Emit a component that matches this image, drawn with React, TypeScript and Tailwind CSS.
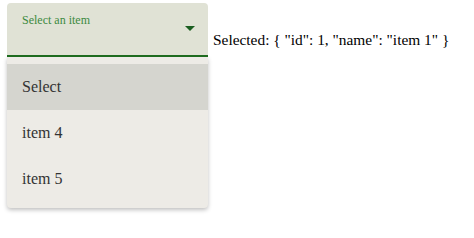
import { useState } from "react";

interface Item {
  id: number;
  name: string;
}

const items: Item[] = [
  { id: 4, name: "item 4" },
  { id: 5, name: "item 5" },
];

export default function App() {
  const [selected] = useState<Item>({ id: 1, name: "item 1" });

  return (
    <div className="flex items-start font-['Liberation_Serif',serif] w-[474px] h-[238px] bg-white">
      <div className="ml-[7px] mt-[3px] w-[201px]">
        {/* Field */}
        <div className="relative h-[54px] bg-[#e0e2d5] rounded-t-[4px] border-b-2 border-[#1e6b1e]">
          <span className="absolute left-[15px] top-[8px] text-[12px] text-[#3d8a3f]">Select an item</span>
          <svg className="absolute left-[178px] top-[23px]" width="10" height="5" viewBox="0 0 10 5">
            <path d="M0 0h10L5 5z" fill="#1b5e20" />
          </svg>
        </div>

        {/* Menu */}
        <div className="pt-[7px] pb-[6px] bg-[#edebe6] rounded-b-[4px] shadow-[0_2px_4px_rgba(0,0,0,0.25)]">
          <div className="h-[46px] flex items-center pl-[15px] bg-[#d5d5cf] text-[16px] text-[#333]">Select</div>
          {items.map((item) => (
            <div key={item.id} className="h-[46px] flex items-center pl-[15px] text-[16px] text-[#333]">
              {item.name}
            </div>
          ))}
        </div>
      </div>

      <div className="ml-[5px] mt-[28px] text-[15.4px] text-black">
        Selected: {`{ "id": ${selected.id}, "name": "${selected.name}" }`}
      </div>
    </div>
  );
}
